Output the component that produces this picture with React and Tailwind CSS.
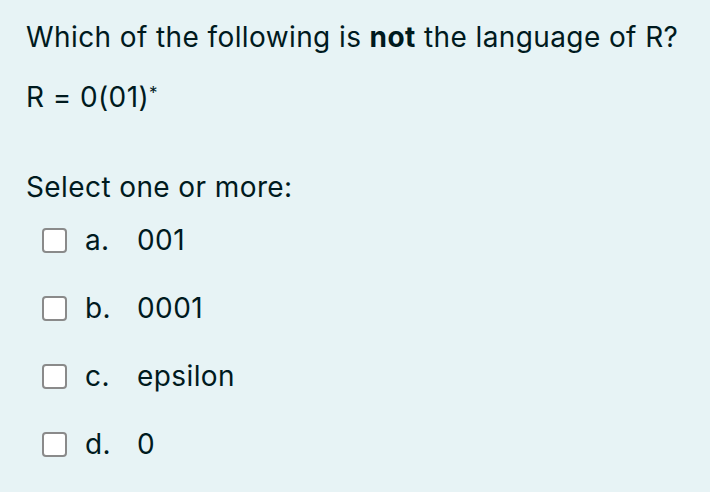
export default function App() {
  const opts = [
    ["a.", "001"],
    ["b.", "0001"],
    ["c.", "epsilon"],
    ["d.", "0"],
  ];
  return (
    <div
      className="w-[710px] h-[492px] bg-[#e7f3f5] text-[#001a1e] px-[26px] pt-[19px] overflow-hidden"
      style={{ fontFamily: "Inter, 'Liberation Sans', sans-serif" }}
    >
      <p className="text-[28px] leading-[36px] tracking-[0.4px]">
        Which of the following is <b className="font-bold">not</b> the language of R?
      </p>
      <p className="text-[28px] leading-[36px] mt-[24px] tracking-[0.4px]">
        R = 0(01)<sup className="text-[17px] leading-none relative top-[-8px] tracking-normal">*</sup>
      </p>
      <p className="text-[28px] leading-[36px] mt-[54px] tracking-[0.4px]">Select one or more:</p>
      <div className="flex flex-col mt-[17px] gap-[32px]">
        {opts.map(([l, t]) => (
          <div key={l} className="flex items-center h-[36px] pl-[16px]">
            <span className="w-[25px] h-[25px] rounded-[4px] border-2 border-[#8a8a8a] bg-white shrink-0" />
            <span className="text-[28px] leading-[36px] ml-[18px] w-[52px] tracking-[0.4px]">{l}</span>
            <span className="text-[28px] leading-[36px] tracking-[0.4px]">{t}</span>
          </div>
        ))}
      </div>
    </div>
  );
}
